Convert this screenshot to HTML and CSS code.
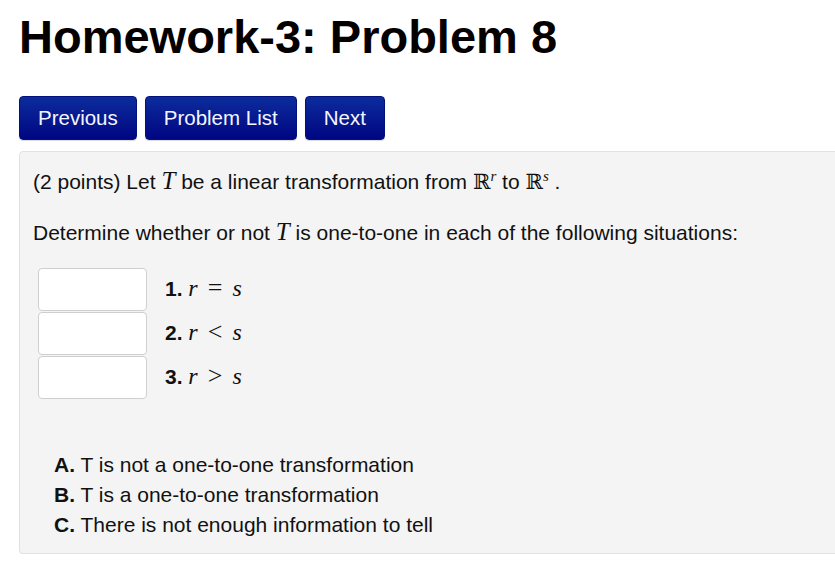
FILE: index.html
```html
<!DOCTYPE html>
<html>
<head>
<meta charset="utf-8">
<link rel="stylesheet" href="styles.css">
</head>
<body>
<div class="page">
  <h1 class="title">Homework-3: Problem 8</h1>
  <div class="nav">
    <a class="btn">Previous</a>
    <a class="btn">Problem List</a>
    <a class="btn">Next</a>
  </div>
  <div class="panel">
    <p class="line first">(2 points) Let <span class="mi big">T</span> be a linear transformation from <span class="bb">ℝ</span><sup class="mi sup">r</sup> to <span class="bb">ℝ</span><sup class="mi sup">s</sup> .</p>
    <p class="line second">Determine whether or not <span class="mi big">T</span> is one-to-one in each of the following situations:</p>
    <div class="rows">
      <div class="row"><span class="box"></span><span class="lbl"><b>1.</b> <span class="mi">r</span><span class="op">=</span><span class="mi">s</span></span></div>
      <div class="row"><span class="box"></span><span class="lbl"><b>2.</b> <span class="mi">r</span><span class="op">&lt;</span><span class="mi">s</span></span></div>
      <div class="row"><span class="box"></span><span class="lbl"><b>3.</b> <span class="mi">r</span><span class="op">&gt;</span><span class="mi">s</span></span></div>
    </div>
    <ul class="opts">
      <li><b>A.</b> T is not a one-to-one transformation</li>
      <li><b>B.</b> T is a one-to-one transformation</li>
      <li><b>C.</b> There is not enough information to tell</li>
    </ul>
  </div>
</div>
</body>
</html>
```

FILE: styles.css
```css
html, body {
  margin: 0;
  padding: 0;
  background: #fff;
  overflow: hidden;
}
body {
  font-family: "Liberation Sans", Arial, sans-serif;
  color: #000;
}
.page {
  padding-left: 19px;
}
.title {
  margin: 13px 0 0 0;
  font-size: 47px;
  line-height: 47px;
  font-weight: bold;
  color: #050000;
}
.nav {
  display: flex;
  gap: 8px;
  margin-top: 36px;
}
.btn {
  display: block;
  padding: 10px 18px;
  font-size: 20.5px;
  line-height: 22px;
  color: #f4f6ff;
  background: linear-gradient(#0c2c9c, #000682);
  border: 1px solid #02127a;
  border-radius: 4px;
  box-shadow: 0 1px 1px rgba(0,0,0,0.15);
}
.panel {
  margin-top: 11px;
  width: 840px;
  background: #f4f4f4;
  border: 1px solid #e2e2e2;
  border-radius: 4px;
  padding: 18px 13px 13px 13px;
  box-sizing: border-box;
  box-shadow: 0 1px 1px rgba(0,0,0,0.04);
}
.line {
  margin: 0;
  font-size: 21px;
  line-height: 22px;
  color: #111;
}
.second {
  margin-top: 28px;
}
.mi {
  font-family: "Liberation Serif", "Times New Roman", serif;
  font-style: italic;
  font-size: 22px;
}
.big {
  font-size: 25px;
}
.bb {
  font-family: "DejaVu Serif", serif;
  font-size: 21px;
}
.sup {
  font-size: 15px;
  vertical-align: 8px;
  line-height: 0;
}
.rows {
  display: flex;
  flex-direction: column;
  gap: 1px;
  margin-top: 24px;
  padding-left: 5px;
}
.row {
  display: flex;
  align-items: center;
  gap: 18px;
}
.box {
  display: block;
  width: 109px;
  height: 43px;
  box-sizing: border-box;
  background: #fff;
  border: 1px solid #cfcfcf;
  border-radius: 4px;
}
.lbl {
  font-size: 21px;
  line-height: 22px;
  color: #111;
  margin-top: -3px;
}
.lbl .mi {
  font-size: 24px;
}
.op {
  font-family: "Liberation Serif", serif;
  font-size: 26px;
  margin: 0 10px;
}
.opts {
  list-style: none;
  margin: 51px 0 0 0;
  padding: 0 0 0 21px;
  font-size: 21px;
  line-height: 30px;
  color: #111;
}
```
